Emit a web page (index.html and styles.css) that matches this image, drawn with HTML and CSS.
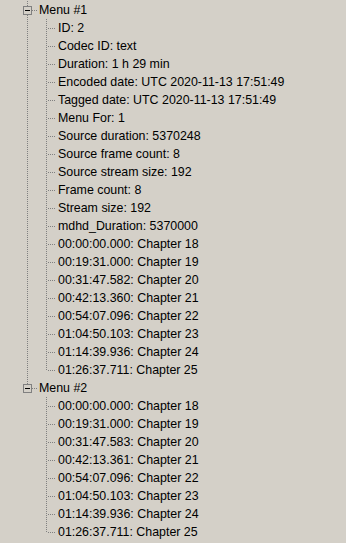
FILE: index.html
```html
<!DOCTYPE html>
<html lang="en">
<head>
    <meta charset="UTF-8">
    <title>Menu tree</title>
    <link rel="stylesheet" href="styles.css">
</head>
<body>
    <div class="tree">
        <div class="node">
            <div class="row head"><span class="toggle"></span><span class="label">Menu #1</span></div>
            <ul class="children">
                <li>ID: 2</li>
                <li>Codec ID: text</li>
                <li>Duration: 1 h 29 min</li>
                <li>Encoded date: UTC 2020-11-13 17:51:49</li>
                <li>Tagged date: UTC 2020-11-13 17:51:49</li>
                <li>Menu For: 1</li>
                <li>Source duration: 5370248</li>
                <li>Source frame count: 8</li>
                <li>Source stream size: 192</li>
                <li>Frame count: 8</li>
                <li>Stream size: 192</li>
                <li>mdhd_Duration: 5370000</li>
                <li>00:00:00.000: Chapter 18</li>
                <li>00:19:31.000: Chapter 19</li>
                <li>00:31:47.582: Chapter 20</li>
                <li>00:42:13.360: Chapter 21</li>
                <li>00:54:07.096: Chapter 22</li>
                <li>01:04:50.103: Chapter 23</li>
                <li>01:14:39.936: Chapter 24</li>
                <li>01:26:37.711: Chapter 25</li>
            </ul>
        </div>
        <div class="node last">
            <div class="row head"><span class="toggle"></span><span class="label">Menu #2</span></div>
            <ul class="children">
                <li>00:00:00.000: Chapter 18</li>
                <li>00:19:31.000: Chapter 19</li>
                <li>00:31:47.583: Chapter 20</li>
                <li>00:42:13.361: Chapter 21</li>
                <li>00:54:07.096: Chapter 22</li>
                <li>01:04:50.103: Chapter 23</li>
                <li>01:14:39.936: Chapter 24</li>
                <li>01:26:37.711: Chapter 25</li>
            </ul>
        </div>
    </div>
</body>
</html>
```

FILE: styles.css
```css
body {
    margin: 0;
    background-color: #d4d0c8; /* Classic dialog gray */
    font-family: 'Liberation Sans', Arial, sans-serif;
    font-size: 12.4px;
    color: #000;
}

.tree {
    padding-top: 1px;
}

/* vertical line joining the top level nodes */
.node {
    background-image: repeating-linear-gradient(to bottom, #808080 0 1px, transparent 1px 2px);
    background-repeat: no-repeat;
    background-position: 27px 0;
    background-size: 1px 100%;
}

.node.last {
    background-size: 1px 5px;
}

.row {
    display: flex;
    align-items: center;
    height: 18px;
    line-height: 18px;
    white-space: nowrap;
}

.head {
    padding-left: 23px;
    /* horizontal connector after the box */
    background-image: repeating-linear-gradient(to right, #808080 0 1px, transparent 1px 2px);
    background-repeat: no-repeat;
    background-position: 32px 9px;
    background-size: 5px 1px;
}

.toggle {
    box-sizing: border-box;
    width: 9px;
    height: 9px;
    border: 1px solid #808080;
    background-color: #d4d0c8;
    display: flex;
    align-items: center;
    justify-content: center;
}

.toggle::after {
    content: "";
    width: 5px;
    height: 1px;
    background-color: #000;
}

.label {
    margin-left: 7px;
}

.children {
    list-style: none;
    margin: 0;
    padding: 0;
}

.children li {
    height: 18px;
    line-height: 18px;
    padding-left: 58px;
    white-space: nowrap;
    background-image:
        repeating-linear-gradient(to bottom, #808080 0 1px, transparent 1px 2px),
        repeating-linear-gradient(to right, #808080 0 1px, transparent 1px 2px);
    background-repeat: no-repeat;
    background-position: 46px 0, 48px 9px;
    background-size: 1px 100%, 7px 1px;
}

.children li:last-child {
    background-size: 1px 10px, 7px 1px;
}
```
